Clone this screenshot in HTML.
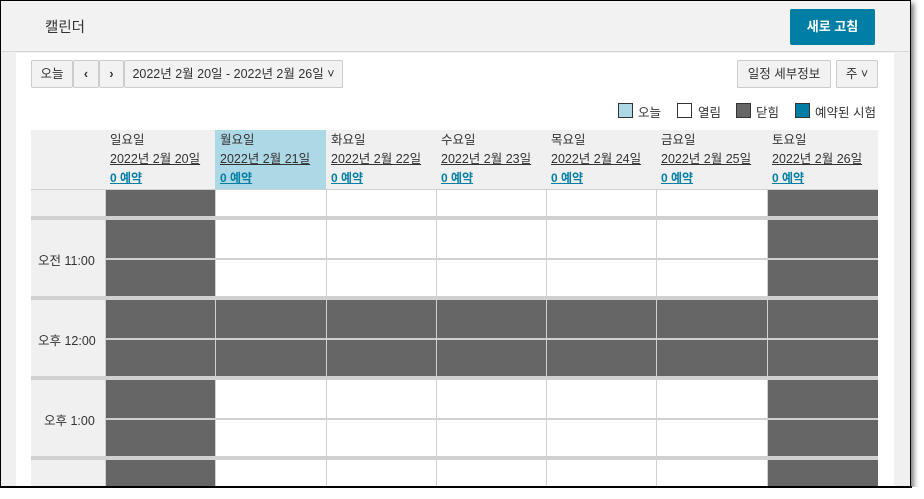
<!DOCTYPE html>
<html><head><meta charset="utf-8"><style>
*{margin:0;padding:0;box-sizing:border-box}
body{width:924px;height:499px;background:#fff;font-family:"Liberation Sans","Noto Sans CJK KR",sans-serif;position:relative;overflow:hidden;font-size:12px;color:#333}
.a{position:absolute}
.frame{left:0;top:0;width:911px;height:487px;border:1px solid #000;background:#f0f0f0;overflow:hidden;box-shadow:3px 3px 5px rgba(0,0,0,.5)}
.btn{position:absolute;border:1px solid #ccc;background:#f2f2f2;border-radius:2px;height:28px;top:60px;font-size:12.5px;line-height:26px;text-align:center;color:#333}
.leg{position:absolute;top:103px;width:15px;height:15px;border:1px solid #333}
.lt{position:absolute;top:102px;font-size:12.5px}
.dh{position:absolute;top:130px;height:60px;padding:1px 0 0 5px;font-size:12.5px;line-height:19px}
.dh u{color:#333}
.dh b{color:#007ea3;text-decoration:underline;font-weight:bold;font-size:12px}
</style></head><body>
<div class="a frame">
 <div class="a" style="left:0;top:0;width:911px;height:51px;background:#f2f2f2;border-bottom:1px solid #d6d6d6"></div>
 <div class="a" style="left:44px;top:15px;font-size:14.5px;color:#333">캘린더</div>
 <div class="a" style="left:789px;top:8px;width:85px;height:36px;background:#007ea3;border-radius:2px;color:#fff;font-weight:bold;font-size:13px;line-height:36px;text-align:center">새로 고침</div>
 <div class="a" style="left:15px;top:52px;width:878px;height:440px;background:#fff"></div>
</div>
<div class="btn" style="left:31px;width:42px">오늘</div>
<div class="btn" style="left:73px;width:26px;font-weight:bold">‹</div>
<div class="btn" style="left:99px;width:25px;font-weight:bold">›</div>
<div class="btn" style="left:124px;width:219px">2022년 2월 20일 - 2022년 2월 26일 ˅</div>
<div class="btn" style="left:737px;width:94px">일정 세부정보</div>
<div class="btn" style="left:836px;width:42px">주 ˅</div>
<div class="leg" style="left:618px;background:#add8e6"></div><div class="lt" style="left:638px">오늘</div>
<div class="leg" style="left:677px;background:#fff"></div><div class="lt" style="left:698px">열림</div>
<div class="leg" style="left:736px;background:#666"></div><div class="lt" style="left:756px">닫힘</div>
<div class="leg" style="left:795px;background:#007ea3"></div><div class="lt" style="left:815px">예약된 시험</div>
<div class="a" style="left:31px;top:130px;width:847px;height:360px;background:#f0f0f0"></div>
<div class="a" style="left:215px;top:130px;width:111px;height:60px;background:#add8e6"></div>
<div class="dh" style="left:105px">일요일<br><u>2022년 2월 20일</u><br><b>0 예약</b></div>
<div class="dh" style="left:215px">월요일<br><u>2022년 2월 21일</u><br><b>0 예약</b></div>
<div class="dh" style="left:326px">화요일<br><u>2022년 2월 22일</u><br><b>0 예약</b></div>
<div class="dh" style="left:436px">수요일<br><u>2022년 2월 23일</u><br><b>0 예약</b></div>
<div class="dh" style="left:546px">목요일<br><u>2022년 2월 24일</u><br><b>0 예약</b></div>
<div class="dh" style="left:656px">금요일<br><u>2022년 2월 25일</u><br><b>0 예약</b></div>
<div class="dh" style="left:767px">토요일<br><u>2022년 2월 26일</u><br><b>0 예약</b></div>
<div class="a" style="left:31px;top:189px;width:847px;height:1px;background:#d0d0d0"></div>
<div class="a" style="left:105px;top:190px;width:773px;height:300px;background:#fff"></div>
<div class="a" style="left:105px;top:190px;width:110px;height:300px;background:#666"></div>
<div class="a" style="left:767px;top:190px;width:111px;height:300px;background:#666"></div>
<div class="a" style="left:105px;top:300px;width:773px;height:77px;background:#666"></div>
<div class="a" style="left:105px;top:190px;width:1px;height:300px;background:#d0d0d0"></div>
<div class="a" style="left:215px;top:190px;width:1px;height:300px;background:#d0d0d0"></div>
<div class="a" style="left:326px;top:190px;width:1px;height:300px;background:#d0d0d0"></div>
<div class="a" style="left:436px;top:190px;width:1px;height:300px;background:#d0d0d0"></div>
<div class="a" style="left:546px;top:190px;width:1px;height:300px;background:#d0d0d0"></div>
<div class="a" style="left:656px;top:190px;width:1px;height:300px;background:#d0d0d0"></div>
<div class="a" style="left:767px;top:190px;width:1px;height:300px;background:#d0d0d0"></div>
<div class="a" style="left:31px;top:216px;width:847px;height:4px;background:#d0d0d0"></div>
<div class="a" style="left:105px;top:258px;width:773px;height:2px;background:#d0d0d0"></div>
<div class="a" style="left:31px;top:296px;width:847px;height:4px;background:#d0d0d0"></div>
<div class="a" style="left:105px;top:338px;width:773px;height:2px;background:#d0d0d0"></div>
<div class="a" style="left:31px;top:376px;width:847px;height:4px;background:#d0d0d0"></div>
<div class="a" style="left:105px;top:418px;width:773px;height:2px;background:#d0d0d0"></div>
<div class="a" style="left:31px;top:456px;width:847px;height:4px;background:#d0d0d0"></div>
<div class="a" style="left:38px;top:250px;font-size:12.5px">오전 11:00</div>
<div class="a" style="left:38px;top:330px;font-size:12.5px">오후 12:00</div>
<div class="a" style="left:44px;top:410px;font-size:12.5px">오후 1:00</div>
<div class="a" style="left:0;top:487px;width:924px;height:12px;background:#fff"></div>
<div class="a" style="left:0;top:486px;width:912px;height:2px;background:#000"></div>
</body></html>
